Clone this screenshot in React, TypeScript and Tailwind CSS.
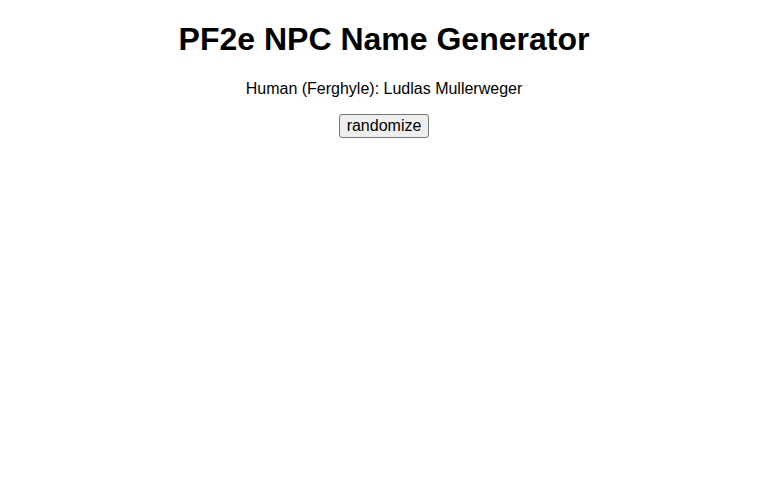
import { useState } from "react";

const NAMES = ["Human (Ferghyle): Ludlas Mullerweger"];

export default function App() {
  const [name, setName] = useState(NAMES[0]);

  return (
    <div className="min-h-screen bg-white text-center text-black font-['Liberation_Sans',Arial,sans-serif]">
      <h1 className="pt-[21px] text-[32px] font-bold leading-[37px]">PF2e NPC Name Generator</h1>
      <p className="mt-[22px] text-base leading-[18px]">{name}</p>
      <button
        type="button"
        onClick={() => setName(NAMES[Math.floor(Math.random() * NAMES.length)])}
        className="mt-[16px] rounded-[3px] border border-[#767676] bg-[#efefef] px-[7px] py-[2px] text-base leading-[18px] text-black hover:bg-[#e5e5e5]"
      >
        randomize
      </button>
    </div>
  );
}
